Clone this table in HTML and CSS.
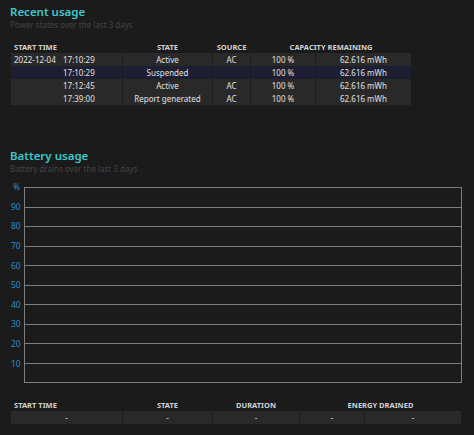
FILE: index.html
```html
<!DOCTYPE html>
<html>
<head>
<meta charset="utf-8">
<link rel="stylesheet" href="styles.css">
</head>
<body>
<section class="recent">
  <h2 class="title">Recent usage</h2>
  <p class="subtitle">Power states over the last 3 days</p>
  <table class="tbl usage">
    <colgroup><col class="c-time"><col class="c-state"><col class="c-src"><col class="c-pct"><col class="c-cap"></colgroup>
    <thead>
      <tr><th class="left">START TIME</th><th>STATE</th><th>SOURCE</th><th colspan="2">CAPACITY REMAINING</th></tr>
    </thead>
    <tbody>
      <tr><td class="dt"><span class="date">2022-12-04</span><span class="time">17:10:29</span></td><td>Active</td><td>AC</td><td class="pct">100 %</td><td>62.616 mWh</td></tr>
      <tr class="susp"><td class="dt"><span class="date"></span><span class="time">17:10:29</span></td><td>Suspended</td><td></td><td class="pct">100 %</td><td>62.616 mWh</td></tr>
      <tr><td class="dt"><span class="date"></span><span class="time">17:12:45</span></td><td>Active</td><td>AC</td><td class="pct">100 %</td><td>62.616 mWh</td></tr>
      <tr><td class="dt"><span class="date"></span><span class="time">17:39:00</span></td><td>Report generated</td><td>AC</td><td class="pct">100 %</td><td>62.616 mWh</td></tr>
    </tbody>
  </table>
</section>

<section class="battery">
  <h2 class="title">Battery usage</h2>
  <p class="subtitle">Battery drains over the last 3 days</p>
  <div class="chart">
    <div class="axis">
      <span>%</span><span>90</span><span>80</span><span>70</span><span>60</span><span>50</span><span>40</span><span>30</span><span>20</span><span>10</span>
    </div>
    <div class="plot">
      <div class="band"></div><div class="band"></div><div class="band"></div><div class="band"></div><div class="band"></div>
      <div class="band"></div><div class="band"></div><div class="band"></div><div class="band"></div><div class="band"></div>
    </div>
  </div>
  <table class="tbl drains">
    <colgroup><col class="d-time"><col class="d-state"><col class="d-dur"><col class="d-e1"><col class="d-e2"></colgroup>
    <thead>
      <tr><th class="left">START TIME</th><th>STATE</th><th>DURATION</th><th colspan="2">ENERGY DRAINED</th></tr>
    </thead>
    <tbody>
      <tr><td>-</td><td>-</td><td>-</td><td>-</td><td>-</td></tr>
    </tbody>
  </table>
</section>
</body>
</html>
```
FILE: styles.css
```css
html, body {
  margin: 0;
  padding: 0;
  background: #1b1b1b;
}
body {
  font-family: "Noto Sans", "Open Sans", sans-serif;
  color: #d6d6d6;
  padding: 5px 0 0 10px;
  width: 464px;
  height: 430px;
  overflow: hidden;
}
.title {
  margin: 0;
  font-size: 11.5px;
  font-weight: 600;
  color: #3fc8ca;
  line-height: 14px;
}
.subtitle {
  margin: 0;
  font-size: 8px;
  line-height: 12px;
  color: #444444;
}
.tbl {
  border-collapse: separate;
  border-spacing: 1px 0;
  table-layout: fixed;
  margin-left: 0;
}
.tbl th {
  font-size: 7.5px;
  font-weight: 700;
  color: #d2d2d2;
  text-align: center;
  height: 12px;
  padding: 0;
  line-height: 12px;
  white-space: nowrap;
}
.tbl th.left {
  text-align: left;
  padding-left: 3px;
}
.tbl td {
  background: #292929;
  font-size: 8px;
  height: 13px;
  line-height: 13px;
  padding: 0;
  text-align: center;
  white-space: nowrap;
  color: #e0e0e0;
}
.tbl tr.susp td {
  background: #1e1e32;
}
.usage {
  margin-top: 10px;
  width: 402px;
}
.c-time { width: 111px; }
.c-state { width: 89px; }
.c-src { width: 37px; }
.c-pct { width: 64px; }
.c-cap { width: 95px; }
.tbl td.dt {
  text-align: left;
  padding-left: 3px;
}
.dt .date {
  display: inline-block;
  width: 49px;
}
.battery {
  margin-top: 44px;
}
.chart {
  display: flex;
  align-items: flex-start;
  margin-top: 12px;
  margin-left: 1px;
}
.axis {
  width: 9px;
  padding-right: 4px;
  display: flex;
  flex-direction: column;
  margin-top: -9.8px;
}
.axis span {
  flex: 0 0 19.6px;
  height: 19.6px;
  line-height: 19.6px;
  font-size: 8.5px;
  color: #2a8cc4;
  text-align: right;
}
.plot {
  width: 436px;
  height: 194px;
  border: 1px solid #7d7d7d;
  display: flex;
  flex-direction: column;
}
.band {
  flex: 1;
  border-top: 1px solid #7d7d7d;
}
.band:first-child {
  border-top: none;
}
.drains {
  margin-top: 16px;
  width: 452px;
}
.d-time { width: 111px; }
.d-state { width: 89px; }
.d-dur { width: 86px; }
.d-e1 { width: 64px; }
.d-e2 { width: 96px; }
```
